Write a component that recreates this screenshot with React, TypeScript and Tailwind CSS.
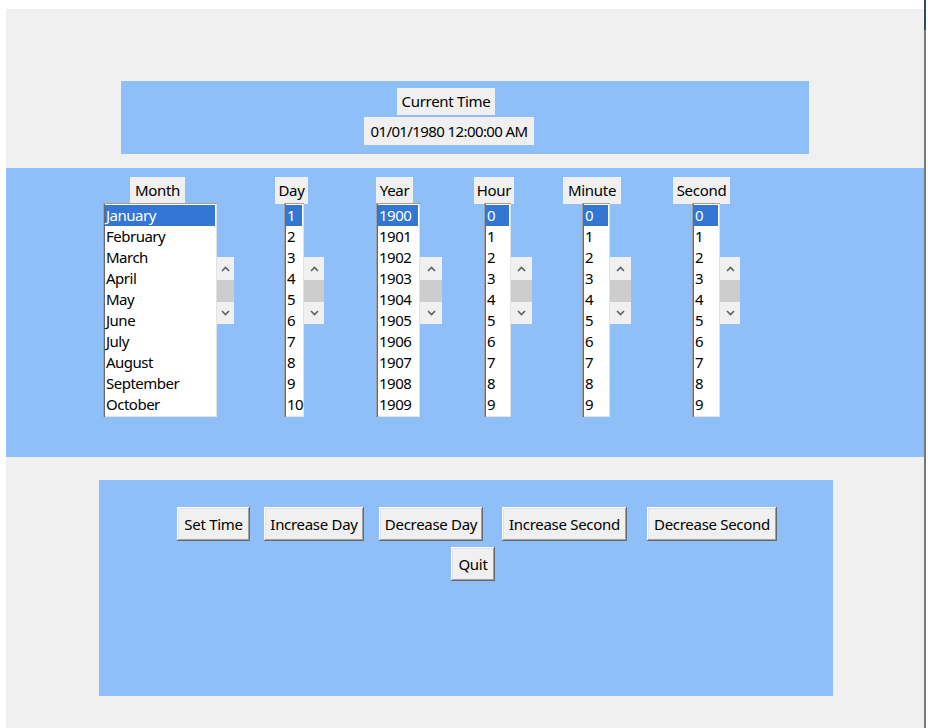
const months = ['January', 'February', 'March', 'April', 'May', 'June', 'July', 'August', 'September', 'October'];
const days = ['1', '2', '3', '4', '5', '6', '7', '8', '9', '10'];
const years = ['1900', '1901', '1902', '1903', '1904', '1905', '1906', '1907', '1908', '1909'];
const digits = ['0', '1', '2', '3', '4', '5', '6', '7', '8', '9'];

const font = "font-['Noto_Sans','Liberation_Sans',sans-serif]";

function Chevron({ up }: { up?: boolean }) {
  return (
    <svg width="9" height="6" viewBox="0 0 9 6">
      <polyline
        points={up ? '1,5 4.5,1.5 8,5' : '1,1 4.5,4.5 8,1'}
        fill="none"
        stroke="#606060"
        strokeWidth="1.6"
      />
    </svg>
  );
}

function Scroll({ w }: { w: string }) {
  return (
    <div className={`${w} mt-[54px] h-[67px] bg-[#f0f0f0] flex flex-col items-center`}>
      <div className="h-[23px] flex items-center justify-center"><Chevron up /></div>
      <div className="h-[22px] w-full bg-[#cdcdcd]" />
      <div className="h-[22px] flex items-center justify-center"><Chevron /></div>
    </div>
  );
}

type GroupProps = {
  title: string;
  items: string[];
  ml: string;
  labelMl: string;
  labelW: string;
  boxW: string;
  scrollW: string;
};

function Group({ title, items, ml, labelMl, labelW, boxW, scrollW }: GroupProps) {
  return (
    <div className={`${ml} flex flex-col`}>
      <div className={`${labelMl} ${labelW} h-[27px] bg-[#f0f0f0] text-[15px] leading-[27px] text-center text-black tracking-[-0.3px]`}>
        {title}
      </div>
      <div className="flex items-start -mt-px">
        <div className={`${boxW} h-[214px] bg-white p-[2px] shadow-[inset_1px_1px_0_#a0a0a0,inset_2px_0_0_#696969,inset_-1px_-1px_0_#e3e3e3]`}>
          {items.map((it, i) => (
            <div
              key={it}
              className={`h-[21px] pl-[1px] text-[15px] leading-[21px] whitespace-nowrap tracking-[-0.5px] ${
                i === 0 ? 'bg-[#3376d3] text-white' : 'text-black'
              }`}
            >
              {it}
            </div>
          ))}
        </div>
        <Scroll w={scrollW} />
      </div>
    </div>
  );
}

function Btn({ label, w, ml }: { label: string; w: string; ml?: string }) {
  return (
    <button
      className={`${w} ${ml ?? ''} h-[34px] bg-[#f0f0f0] text-[15px] text-black whitespace-nowrap tracking-[-0.3px] shadow-[inset_-1px_-1px_0_#696969,inset_1px_1px_0_#ffffff,inset_-2px_-2px_0_#a0a0a0,inset_2px_2px_0_#e3e3e3]`}
    >
      {label}
    </button>
  );
}

export default function App() {
  return (
    <div className={`${font} w-[928px] h-[728px] bg-white flex overflow-hidden`}>
      <div className="ml-[6px] mt-[9px] w-[918px] h-[719px] bg-[#f0f0f0] flex flex-col">
        <div className="ml-[115px] mt-[72px] w-[688px] h-[73px] bg-[#8fbff9] flex flex-col pt-[7px]">
          <div className="ml-[276px] w-[98px] h-[27px] bg-[#f0f0f0] text-[15px] leading-[27px] text-center whitespace-nowrap tracking-[-0.3px]">
            Current Time
          </div>
          <div className="ml-[243px] mt-[2px] w-[170px] h-[28px] bg-[#f0f0f0] text-[15px] leading-[28px] text-center whitespace-nowrap tracking-[-0.6px]">
            01/01/1980 12:00:00 AM
          </div>
        </div>

        <div className="mt-[14px] h-[289px] bg-[#8fbff9] flex items-start pt-[9px]">
          <Group title="Month" items={months} ml="ml-[97px]" labelMl="ml-[27px]" labelW="w-[55px]" boxW="w-[114px]" scrollW="w-[17px]" />
          <Group title="Day" items={days} ml="ml-[50px]" labelMl="-ml-[9px]" labelW="w-[33px]" boxW="w-[20px]" scrollW="w-[20px]" />
          <Group title="Year" items={years} ml="ml-[52px]" labelMl="ml-0" labelW="w-[37px]" boxW="w-[44px]" scrollW="w-[22px]" />
          <Group title="Hour" items={digits} ml="ml-[42px]" labelMl="-ml-[10px]" labelW="w-[40px]" boxW="w-[27px]" scrollW="w-[21px]" />
          <Group title="Minute" items={digits} ml="ml-[50px]" labelMl="-ml-[19px]" labelW="w-[58px]" boxW="w-[28px]" scrollW="w-[21px]" />
          <Group title="Second" items={digits} ml="ml-[61px]" labelMl="-ml-[19px]" labelW="w-[57px]" boxW="w-[28px]" scrollW="w-[20px]" />
        </div>

        <div className="ml-[93px] mt-[23px] w-[734px] h-[216px] bg-[#8fbff9] flex flex-col pt-[27px]">
          <div className="flex ml-[78px]">
            <Btn label="Set Time" w="w-[73px]" />
            <Btn label="Increase Day" w="w-[100px]" ml="ml-[14px]" />
            <Btn label="Decrease Day" w="w-[104px]" ml="ml-[15px]" />
            <Btn label="Increase Second" w="w-[125px]" ml="ml-[19px]" />
            <Btn label="Decrease Second" w="w-[130px]" ml="ml-[20px]" />
          </div>
          <div className="flex ml-[352px] mt-[6px]">
            <Btn label="Quit" w="w-[44px]" />
          </div>
        </div>
      </div>
      <div className="w-[2px] h-[728px] flex flex-col">
        <div className="h-[30px] bg-[#2f4a73]" />
        <div className="flex-1 bg-[#7a7a7a]" />
      </div>
    </div>
  );
}
